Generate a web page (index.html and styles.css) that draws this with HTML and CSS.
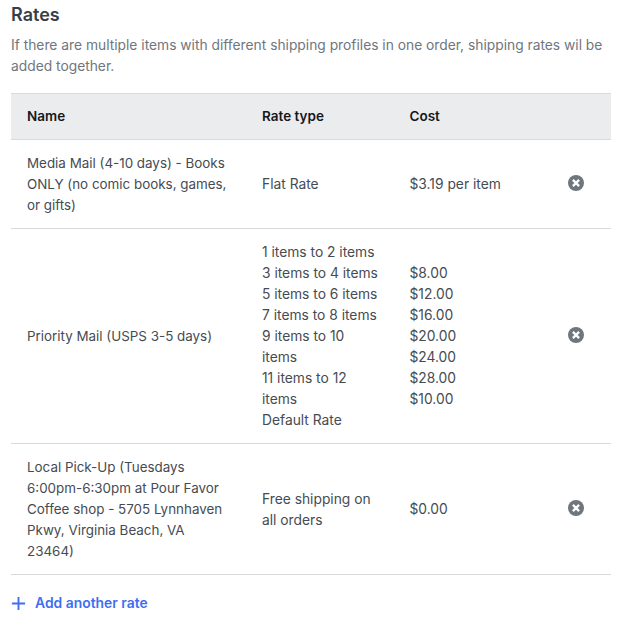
FILE: index.html
```
<!DOCTYPE html>
<html lang="en">
<head>
<meta charset="utf-8">
<title>Rates</title>
<link rel="stylesheet" href="styles.css">
</head>
<body>
<section class="rates">
  <h2 class="title">Rates</h2>
  <p class="desc">If there are multiple items with different shipping profiles in one order, shipping rates wil be added together.</p>
  <table class="table">
    <colgroup><col class="c-name"><col class="c-type"><col class="c-cost"><col class="c-x"></colgroup>
    <thead>
      <tr><th>Name</th><th>Rate type</th><th>Cost</th><th></th></tr>
    </thead>
    <tbody>
      <tr>
        <td class="name">Media Mail (4-10 days) - Books ONLY (no comic books, games, or gifts)</td>
        <td class="wide">Flat Rate</td>
        <td class="wide">$3.19 per item</td>
        <td class="act"><svg class="x" viewBox="0 0 16 16"><circle cx="8" cy="8" r="8" fill="#6f767e"/><path d="M4.9 4.9l6.2 6.2M11.1 4.9l-6.2 6.2" stroke="#fff" stroke-width="2.3"/></svg></td>
      </tr>
      <tr>
        <td class="name">Priority Mail (USPS 3-5 days)</td>
        <td class="wide">1 items to 2 items<br>3 items to 4 items<br>5 items to 6 items<br>7 items to 8 items<br>9 items to 10 items<br>11 items to 12 items<br>Default Rate</td>
        <td class="wide">$8.00<br>$12.00<br>$16.00<br>$20.00<br>$24.00<br>$28.00<br>$10.00</td>
        <td class="act"><svg class="x" viewBox="0 0 16 16"><circle cx="8" cy="8" r="8" fill="#6f767e"/><path d="M4.9 4.9l6.2 6.2M11.1 4.9l-6.2 6.2" stroke="#fff" stroke-width="2.3"/></svg></td>
      </tr>
      <tr>
        <td class="name">Local Pick-Up (Tuesdays 6:00pm-6:30pm at Pour Favor Coffee shop - 5705 Lynnhaven Pkwy, Virginia Beach, VA 23464)</td>
        <td class="wide">Free shipping on all orders</td>
        <td class="wide">$0.00</td>
        <td class="act"><svg class="x" viewBox="0 0 16 16"><circle cx="8" cy="8" r="8" fill="#6f767e"/><path d="M4.9 4.9l6.2 6.2M11.1 4.9l-6.2 6.2" stroke="#fff" stroke-width="2.3"/></svg></td>
      </tr>
    </tbody>
  </table>
  <a class="add" href="#"><svg class="plus" viewBox="0 0 16 16"><path d="M8 1v14M1 8h14" stroke="#3e6ff0" stroke-width="2"/></svg>Add another rate</a>
</section>
</body>
</html>
```
FILE: styles.css
```
* { box-sizing: border-box; }
html, body { margin: 0; background: #fff; }
body { font-family: Inter, "Liberation Sans", sans-serif; color: #464b52; font-size: 13.5px; line-height: 21px; }
.rates { padding: 3px 22px 0 11px; }
.title { margin: 0; font-size: 18px; line-height: 24px; font-weight: 600; color: #373f4a; }
.desc { margin: 8px 0 16px; color: #6f767e; font-size: 13.8px; }
.table { width: 600px; border-collapse: collapse; table-layout: fixed; }
.c-name { width: 235px; }
.c-type { width: 147.5px; }
.c-cost { width: 147.5px; }
.c-x { width: 70px; }
th { background: #ebecee; height: 46px; padding: 0 16px; text-align: left; font-weight: 600; color: #15181c; border-top: 1px solid #d9dadc; border-bottom: 1px solid #d9dadc; }
td { padding: 13px 16px 12px; border-bottom: 1px solid #d9dadc; vertical-align: middle; }
.name { font-size: 13.4px; }
.wide { font-size: 13.8px; padding-right: 11px; }
.act { padding: 0 0 3px 0; }
.x { display: block; width: 16px; height: 16px; margin-left: 27px; }
.add { display: flex; align-items: center; gap: 9px; margin-top: 18px; color: #3e6ff0; font-weight: 600; font-size: 13.9px; text-decoration: none; }
.plus { width: 15px; height: 15px; }
```
